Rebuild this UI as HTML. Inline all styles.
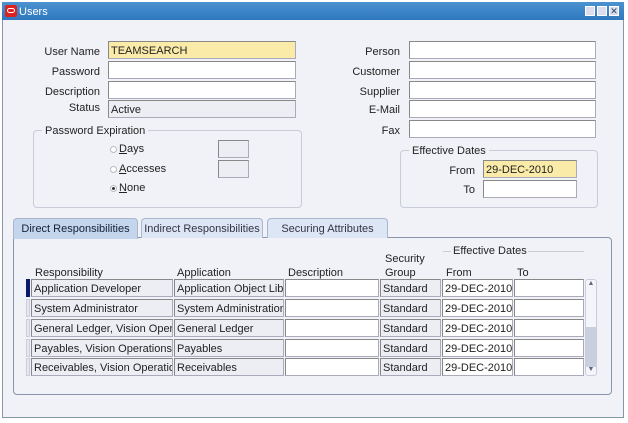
<!DOCTYPE html>
<html><head><style>
body{margin:0;width:628px;height:423px;background:#fff;font-family:"Liberation Sans",sans-serif;font-size:11px;color:#222;position:relative;overflow:hidden}
div,span{position:absolute;box-sizing:border-box}
.win{left:2px;top:2px;width:622px;height:416px;border:1px solid #8a95a8;background:#f1f2f8}
.title{left:2px;top:2px;width:622px;height:18px;background:linear-gradient(#4a92d0,#2f78bd);color:#fff;font-size:11px}
.f{height:18px;border:1px solid #aab;background:#fff;border-top-color:#888;border-left-color:#888;padding:3px 2px 0;white-space:nowrap;overflow:hidden;line-height:12px}
.y{background:#fbeba8}
.g{background:#eceef4}
.l{text-align:right;line-height:14px}
.grp{border:1px solid #c8ccd8;border-radius:4px}
.gt{background:#f1f2f8;padding:0 3px;line-height:12px}
.tab{top:218px;height:20px;border:1px solid #aab6cc;border-bottom:none;border-radius:4px 4px 0 0;background:#dde6f4;text-align:center;line-height:21px;color:#334}
</style></head><body>
<div class="win"></div>
<div class="title"><span style="left:3px;top:3px;width:12px;height:12px;background:#d22;border-radius:2px"></span><span style="left:5px;top:6px;width:8px;height:5px;border:1.5px solid #fff;border-radius:3px"></span><span style="left:17px;top:3px;line-height:14px">Users</span>
<span style="left:583px;top:4px;width:10px;height:10px;background:#dde;border:1px solid #fff"></span>
<span style="left:595px;top:4px;width:10px;height:10px;background:#dde;border:1px solid #fff"></span>
<span style="left:607px;top:4px;width:10px;height:10px;background:#dde;border:1px solid #fff;font-size:9px;line-height:8px;color:#246;text-align:center">✕</span></div>

<div class="l" style="left:20px;top:45px;width:80px">User Name</div>
<div class="l" style="left:20px;top:65px;width:80px">Password</div>
<div class="l" style="left:20px;top:85px;width:80px">Description</div>
<div class="l" style="left:20px;top:101px;width:80px">Status</div>
<div class="f y" style="left:108px;top:41px;width:188px">TEAMSEARCH</div>
<div class="f" style="left:108px;top:61px;width:188px"></div>
<div class="f" style="left:108px;top:81px;width:188px"></div>
<div class="f g" style="left:108px;top:100px;width:188px">Active</div>

<div class="grp" style="left:33px;top:130px;width:269px;height:78px"></div>
<div class="gt" style="left:42px;top:125px">Password Expiration</div>
<div style="left:110px;top:146px;width:7px;height:7px;border:1px solid #bbb;border-radius:50%;background:#fff"></div><div style="left:119px;top:143px"><u>D</u>ays</div>
<div style="left:110px;top:166px;width:7px;height:7px;border:1px solid #bbb;border-radius:50%;background:#fff"></div><div style="left:119px;top:163px"><u>A</u>ccesses</div>
<div style="left:110px;top:185px;width:7px;height:7px;border:1px solid #bbb;border-radius:50%;background:#fff"></div><div style="left:112px;top:187px;width:3px;height:3px;background:#333;border-radius:50%"></div><div style="left:119px;top:182px"><u>N</u>one</div>
<div class="f g" style="left:218px;top:140px;width:31px"></div>
<div class="f g" style="left:218px;top:160px;width:31px"></div>

<div class="l" style="left:320px;top:45px;width:80px">Person</div>
<div class="l" style="left:320px;top:65px;width:80px">Customer</div>
<div class="l" style="left:320px;top:85px;width:80px">Supplier</div>
<div class="l" style="left:320px;top:103px;width:80px">E-Mail</div>
<div class="l" style="left:320px;top:124px;width:80px">Fax</div>
<div class="f" style="left:409px;top:41px;width:187px"></div>
<div class="f" style="left:409px;top:61px;width:187px"></div>
<div class="f" style="left:409px;top:81px;width:187px"></div>
<div class="f" style="left:409px;top:100px;width:187px"></div>
<div class="f" style="left:409px;top:120px;width:187px"></div>
<div class="grp" style="left:400px;top:150px;width:198px;height:58px"></div>
<div class="gt" style="left:409px;top:145px">Effective Dates</div>
<div class="l" style="left:430px;top:164px;width:45px">From</div>
<div class="l" style="left:430px;top:183px;width:45px">To</div>
<div class="f y" style="left:483px;top:160px;width:94px">29-DEC-2010</div>
<div class="f" style="left:483px;top:180px;width:94px"></div>

<div class="grp" style="left:13px;top:237px;width:599px;height:158px;background:#f1f2f8;border-color:#8a95a8;border-radius:0 4px 4px 4px"></div>
<div class="tab" style="left:13px;width:125px;background:#c4d6ee;color:#123;height:21px">Direct Responsibilities</div>
<div class="tab" style="left:141px;width:122px">Indirect Responsibilities</div>
<div class="tab" style="left:267px;width:121px">Securing Attributes</div>

<div style="left:35px;top:267px">Responsibility</div>
<div style="left:177px;top:267px">Application</div>
<div style="left:288px;top:267px">Description</div>
<div style="left:385px;top:253px">Security</div>
<div style="left:385px;top:267px">Group</div>
<div style="left:446px;top:267px">From</div>
<div style="left:517px;top:267px">To</div>
<div style="left:443px;top:251px;width:8px;border-top:1px solid #ccc"></div>
<div style="left:453px;top:245px">Effective Dates</div>
<div style="left:528px;top:251px;width:56px;border-top:1px solid #ccc"></div>

<div style="left:26px;top:279px;width:4px;height:18px;background:#0a1a6a"></div>
<div style="left:26px;top:299px;width:4px;height:18px;background:#e6e8f0;border:1px solid #ccd"></div>
<div style="left:26px;top:319px;width:4px;height:18px;background:#e6e8f0;border:1px solid #ccd"></div>
<div style="left:26px;top:339px;width:4px;height:18px;background:#e6e8f0;border:1px solid #ccd"></div>
<div style="left:26px;top:358px;width:4px;height:18px;background:#e6e8f0;border:1px solid #ccd"></div>

<div class="f g" style="left:31px;top:279px;width:142px">Application Developer</div>
<div class="f g" style="left:174px;top:279px;width:110px">Application Object Library</div>
<div class="f" style="left:285px;top:279px;width:94px"></div>
<div class="f g" style="left:380px;top:279px;width:61px">Standard</div>
<div class="f" style="left:442px;top:279px;width:71px">29-DEC-2010</div>
<div class="f" style="left:514px;top:279px;width:70px"></div>

<div class="f g" style="left:31px;top:299px;width:142px">System Administrator</div>
<div class="f g" style="left:174px;top:299px;width:110px">System Administration</div>
<div class="f" style="left:285px;top:299px;width:94px"></div>
<div class="f g" style="left:380px;top:299px;width:61px">Standard</div>
<div class="f" style="left:442px;top:299px;width:71px">29-DEC-2010</div>
<div class="f" style="left:514px;top:299px;width:70px"></div>

<div class="f g" style="left:31px;top:319px;width:142px">General Ledger, Vision Operations</div>
<div class="f g" style="left:174px;top:319px;width:110px">General Ledger</div>
<div class="f" style="left:285px;top:319px;width:94px"></div>
<div class="f g" style="left:380px;top:319px;width:61px">Standard</div>
<div class="f" style="left:442px;top:319px;width:71px">29-DEC-2010</div>
<div class="f" style="left:514px;top:319px;width:70px"></div>

<div class="f g" style="left:31px;top:339px;width:142px">Payables, Vision Operations</div>
<div class="f g" style="left:174px;top:339px;width:110px">Payables</div>
<div class="f" style="left:285px;top:339px;width:94px"></div>
<div class="f g" style="left:380px;top:339px;width:61px">Standard</div>
<div class="f" style="left:442px;top:339px;width:71px">29-DEC-2010</div>
<div class="f" style="left:514px;top:339px;width:70px"></div>

<div class="f g" style="left:31px;top:358px;width:142px">Receivables, Vision Operations</div>
<div class="f g" style="left:174px;top:358px;width:110px">Receivables</div>
<div class="f" style="left:285px;top:358px;width:94px"></div>
<div class="f g" style="left:380px;top:358px;width:61px">Standard</div>
<div class="f" style="left:442px;top:358px;width:71px">29-DEC-2010</div>
<div class="f" style="left:514px;top:358px;width:70px"></div>

<div style="left:585px;top:279px;width:12px;height:97px;border:1px solid #ccd;background:#f4f5fa;border-radius:3px"></div>
<div style="left:586px;top:327px;width:10px;height:40px;background:#c8d0e0"></div>
<div style="left:586px;top:280px;width:10px;font-size:7px;text-align:center;color:#667">▲</div>
<div style="left:586px;top:366px;width:10px;font-size:7px;text-align:center;color:#667">▼</div>
</body></html>
